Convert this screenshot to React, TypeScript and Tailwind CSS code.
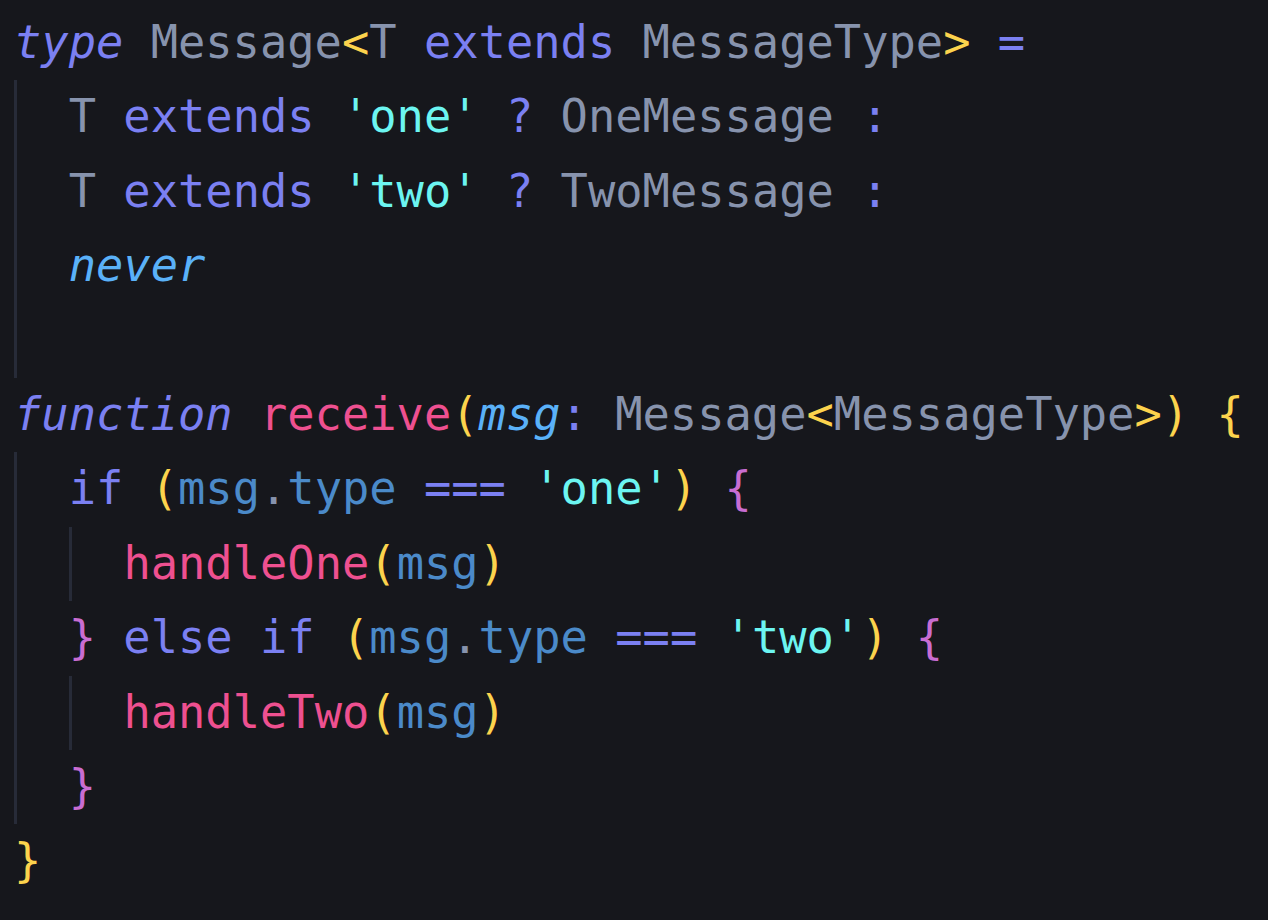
type Tok = { t: string; c: string; i?: boolean };
type Line = { guides: number; toks: Tok[] };

const kw = "text-[#7b80f2]";
const ty = "text-[#8793ad]";
const yl = "text-[#fcd34d]";
const st = "text-[#6cf5f1]";
const fn = "text-[#ee5090]";
const vr = "text-[#4b8ac9]";
const pr = "text-[#5ab1f8]";
const br = "text-[#c96dd2]";

const lines: Line[] = [
  {
    guides: 0,
    toks: [
      { t: "type", c: kw, i: true },
      { t: " Message", c: ty },
      { t: "<", c: yl },
      { t: "T ", c: ty },
      { t: "extends", c: kw },
      { t: " MessageType", c: ty },
      { t: ">", c: yl },
      { t: " =", c: kw },
    ],
  },
  {
    guides: 1,
    toks: [
      { t: "T ", c: ty },
      { t: "extends ", c: kw },
      { t: "'one'", c: st },
      { t: " ? ", c: kw },
      { t: "OneMessage ", c: ty },
      { t: ":", c: kw },
    ],
  },
  {
    guides: 1,
    toks: [
      { t: "T ", c: ty },
      { t: "extends ", c: kw },
      { t: "'two'", c: st },
      { t: " ? ", c: kw },
      { t: "TwoMessage ", c: ty },
      { t: ":", c: kw },
    ],
  },
  { guides: 1, toks: [{ t: "never", c: pr, i: true }] },
  { guides: 1, toks: [] },
  {
    guides: 0,
    toks: [
      { t: "function", c: kw, i: true },
      { t: " ", c: ty },
      { t: "receive", c: fn },
      { t: "(", c: yl },
      { t: "msg", c: pr, i: true },
      { t: ":", c: kw },
      { t: " Message", c: ty },
      { t: "<", c: yl },
      { t: "MessageType", c: ty },
      { t: ">", c: yl },
      { t: ")", c: yl },
      { t: " ", c: ty },
      { t: "{", c: yl },
    ],
  },
  {
    guides: 1,
    toks: [
      { t: "if ", c: kw },
      { t: "(", c: yl },
      { t: "msg", c: vr },
      { t: ".", c: ty },
      { t: "type ", c: vr },
      { t: "=== ", c: kw },
      { t: "'one'", c: st },
      { t: ")", c: yl },
      { t: " ", c: ty },
      { t: "{", c: br },
    ],
  },
  {
    guides: 2,
    toks: [
      { t: "handleOne", c: fn },
      { t: "(", c: yl },
      { t: "msg", c: vr },
      { t: ")", c: yl },
    ],
  },
  {
    guides: 1,
    toks: [
      { t: "}", c: br },
      { t: " else if ", c: kw },
      { t: "(", c: yl },
      { t: "msg", c: vr },
      { t: ".", c: ty },
      { t: "type ", c: vr },
      { t: "=== ", c: kw },
      { t: "'two'", c: st },
      { t: ")", c: yl },
      { t: " ", c: ty },
      { t: "{", c: br },
    ],
  },
  {
    guides: 2,
    toks: [
      { t: "handleTwo", c: fn },
      { t: "(", c: yl },
      { t: "msg", c: vr },
      { t: ")", c: yl },
    ],
  },
  { guides: 1, toks: [{ t: "}", c: br }] },
  { guides: 0, toks: [{ t: "}", c: yl }] },
];

const App = () => {
  return (
    <div className="min-h-[920px] w-full bg-[#16171c] pl-[14px] pt-[6px] font-['DejaVu_Sans_Mono','Liberation_Mono',monospace] text-[45.4px] leading-[74.4px]">
      {lines.map((line, n) => (
        <div key={n} className="flex h-[74.4px] whitespace-pre">
          {/* indent guides */}
          {Array.from({ length: line.guides }).map((_, g) => (
            <span
              key={g}
              className="w-[54.7px] shrink-0 border-l-[3px] border-[#272b38]"
            />
          ))}
          {line.toks.map((tok, k) => (
            <span key={k} className={tok.i ? `${tok.c} italic` : tok.c}>
              {tok.t}
            </span>
          ))}
        </div>
      ))}
    </div>
  );
};

export default App;
